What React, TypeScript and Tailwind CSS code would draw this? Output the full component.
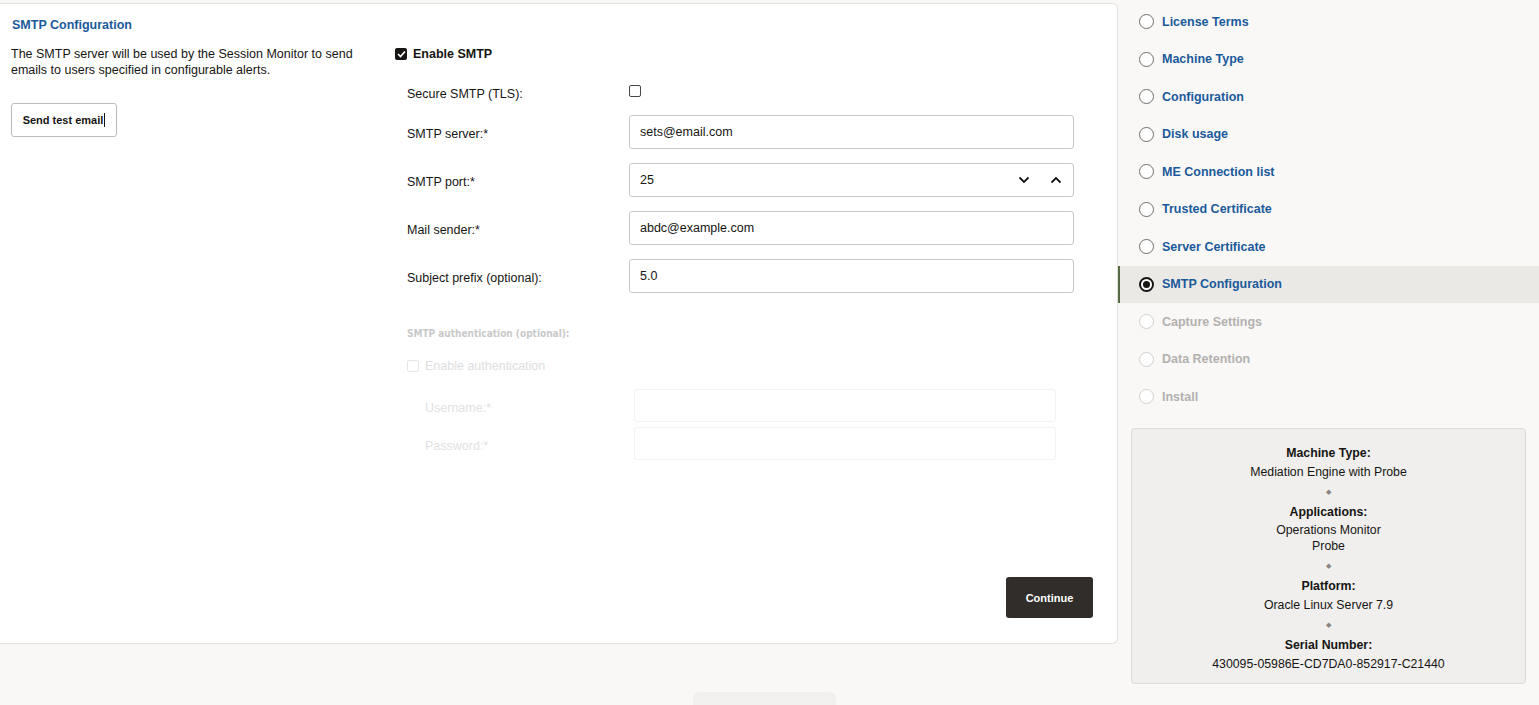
import React from "react";

const steps = [
  { label: "License Terms", state: "done" },
  { label: "Machine Type", state: "done" },
  { label: "Configuration", state: "done" },
  { label: "Disk usage", state: "done" },
  { label: "ME Connection list", state: "done" },
  { label: "Trusted Certificate", state: "done" },
  { label: "Server Certificate", state: "done" },
  { label: "SMTP Configuration", state: "active" },
  { label: "Capture Settings", state: "todo" },
  { label: "Data Retention", state: "todo" },
  { label: "Install", state: "todo" },
];

function Field({ label, value, spinner }: { label: string; value: string; spinner?: boolean }) {
  return (
    <div className="flex items-center">
      <label className="w-[234px] pl-[12px] pt-[3px] text-[#161513]">{label}</label>
      <div className="flex h-[34px] w-[445px] items-center rounded-[3px] border border-[#c9c7c4] bg-white px-[10px] text-[#161513]">
        <span className="flex-1">{value}</span>
        {spinner && (
          <div className="flex items-center gap-[20px] pr-[1px]">
            <svg width="12" height="8" viewBox="0 0 12 8">
              <path d="M1.5 1.5 L6 6 L10.5 1.5" fill="none" stroke="#161513" strokeWidth="1.8" />
            </svg>
            <svg width="12" height="8" viewBox="0 0 12 8">
              <path d="M1.5 6.5 L6 2 L10.5 6.5" fill="none" stroke="#161513" strokeWidth="1.8" />
            </svg>
          </div>
        )}
      </div>
    </div>
  );
}

function Radio({ state }: { state: string }) {
  if (state === "active")
    return (
      <span className="flex h-[15px] w-[15px] items-center justify-center rounded-full border-2 border-[#161513] bg-white">
        <span className="h-[7px] w-[7px] rounded-full bg-[#161513]" />
      </span>
    );
  return (
    <span
      className={
        state === "todo"
          ? "h-[15px] w-[15px] rounded-full border-[1.5px] border-[#d2d0cd] bg-white"
          : "h-[15px] w-[15px] rounded-full border-[1.5px] border-[#716c68] bg-white"
      }
    />
  );
}

export default function App() {
  return (
    <div
      className="flex min-h-[705px] w-[1539px] overflow-hidden bg-[#f9f8f7] text-[12.5px] leading-[16px]"
      style={{ fontFamily: '"Liberation Sans", Arial, sans-serif' }}
    >
      {/* main column */}
      <div className="flex w-[1118px] flex-col">
        <div className="mt-[3px] flex h-[641px] flex-col rounded-r-[6px] border border-l-0 border-[#e3e1de] bg-white">
          <h1 className="pl-[12px] pt-[13px] font-bold text-[#1b5a9a]">SMTP Configuration</h1>

          <div className="mt-[13px] flex">
            <div className="w-[395px] pl-[11px]">
              <p className="w-[350px] text-[#161513]">
                The SMTP server will be used by the Session Monitor to send emails to users specified in
                configurable alerts.
              </p>
              <button className="mt-[25px] flex h-[34px] w-[106px] items-center justify-center rounded-[3px] border border-[#bebcb9] bg-white text-[11px] font-bold text-[#161513]">
                Send test email
                <span className="ml-[1px] inline-block h-[14px] w-[1px] bg-[#161513]" />
              </button>
            </div>

            <div className="flex-1">
              <div className="flex items-center gap-[6px]">
                <span className="flex h-[12px] w-[12px] items-center justify-center rounded-[2px] bg-[#161513]">
                  <svg width="9" height="8" viewBox="0 0 9 8">
                    <path d="M1 4 L3.5 6.5 L8 1.5" fill="none" stroke="white" strokeWidth="1.7" />
                  </svg>
                </span>
                <span className="font-bold text-[#161513]">Enable SMTP</span>
              </div>

              <div className="mt-[23px] flex items-start">
                <label className="w-[234px] pl-[12px] pt-[1px] text-[#161513]">Secure SMTP (TLS):</label>
                <span className="h-[12px] w-[12px] rounded-[2px] border-[1.5px] border-[#4a4540] bg-white" />
              </div>

              <div className="mt-[13px] flex flex-col gap-[14px]">
                <Field label="SMTP server:*" value="sets@email.com" />
                <Field label="SMTP port:*" value="25" spinner />
                <Field label="Mail sender:*" value="abdc@example.com" />
                <Field label="Subject prefix (optional):" value="5.0" />
              </div>

              <div
                className="mt-[33px] pl-[12px] text-[10px] font-bold text-[#c9c9c9]"
                style={{ fontFamily: '"Liberation Sans Narrow", "DejaVu Sans Condensed", sans-serif' }}
              >
                SMTP authentication (optional):
              </div>
              <div className="mt-[16px] flex items-center gap-[6px] pl-[12px] text-[#dedede]">
                <span className="h-[12px] w-[12px] rounded-[2px] border border-[#e6e6e6]" />
                Enable authentication
              </div>
              <div className="mt-[15px] flex flex-col gap-[5px]">
                <div className="flex items-center">
                  <span className="w-[239px] pl-[30px] pt-[5px] text-[#e2e2e2]">Username:*</span>
                  <span className="h-[33px] w-[422px] rounded-[3px] border border-[#f3f3f3]" />
                </div>
                <div className="flex items-center">
                  <span className="w-[239px] pl-[30px] pt-[5px] text-[#e2e2e2]">Password:*</span>
                  <span className="h-[33px] w-[422px] rounded-[3px] border border-[#f3f3f3]" />
                </div>
              </div>
            </div>
          </div>

          <div className="mt-auto flex justify-end pb-[25px] pr-[24px]">
            <button className="h-[41px] w-[87px] rounded-[3px] bg-[#312d2a] text-[11px] font-bold text-white">
              Continue
            </button>
          </div>
        </div>
        <div className="ml-[693px] mt-[48px] h-[20px] w-[143px] rounded-t-[6px] bg-[#f1f0ee]" />
      </div>

      {/* sidebar */}
      <div className="flex w-[421px] flex-col pt-[3px]">
        {steps.map((s) => (
          <div
            key={s.label}
            className={
              s.state === "active"
                ? "flex h-[37.5px] items-center gap-[8px] border-l-2 border-[#556b45] bg-[#ebe9e6] pl-[19px]"
                : "flex h-[37.5px] items-center gap-[8px] pl-[21px]"
            }
          >
            <Radio state={s.state} />
            <span className={s.state === "todo" ? "font-bold text-[#b3b1ae]" : "font-bold text-[#1b5a9a]"}>
              {s.label}
            </span>
          </div>
        ))}

        <div className="ml-[13px] mt-[12px] flex h-[256px] w-[395px] flex-col items-center rounded-[4px] border border-[#dcdad7] bg-[#f0efed] pt-[16px] text-[12.3px] text-[#161513]">
          <div className="font-bold">Machine Type:</div>
          <div className="mt-[3px]">Mediation Engine with Probe</div>
          <div className="mt-[4px] text-[7px] text-[#8a8580]">◆</div>
          <div className="mt-[4px] font-bold">Applications:</div>
          <div className="mt-[2px]">Operations Monitor</div>
          <div>Probe</div>
          <div className="mt-[4px] text-[7px] text-[#8a8580]">◆</div>
          <div className="mt-[4px] font-bold">Platform:</div>
          <div className="mt-[3px]">Oracle Linux Server 7.9</div>
          <div className="mt-[4px] text-[7px] text-[#8a8580]">◆</div>
          <div className="mt-[4px] font-bold">Serial Number:</div>
          <div className="mt-[3px]">430095-05986E-CD7DA0-852917-C21440</div>
        </div>
      </div>
    </div>
  );
}
